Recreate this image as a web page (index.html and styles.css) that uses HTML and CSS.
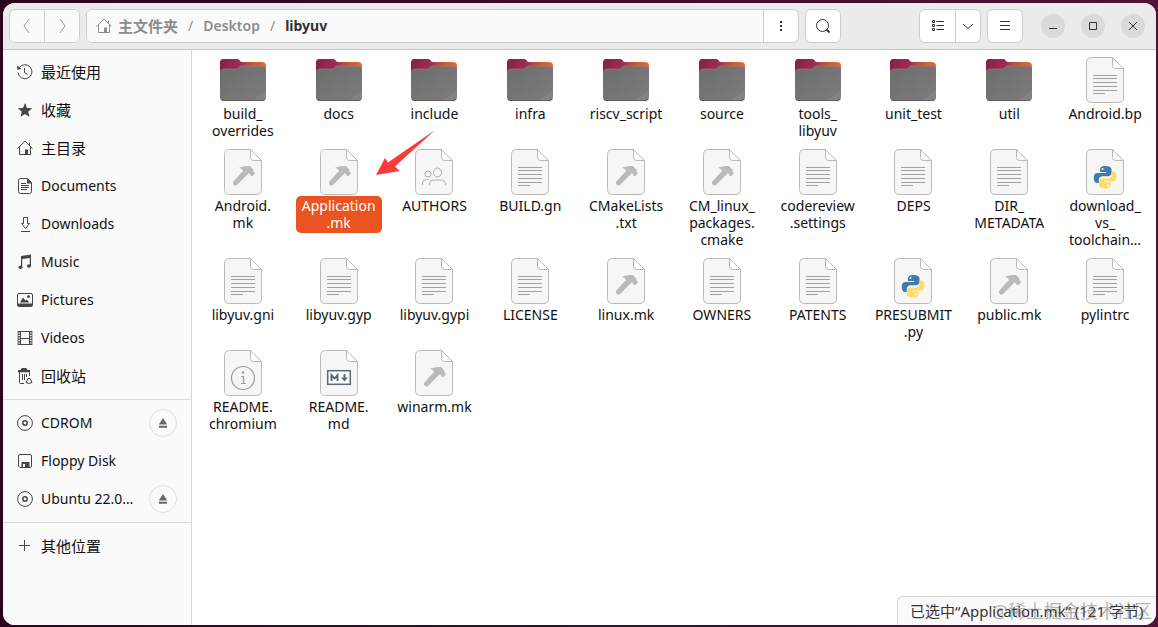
FILE: index.html
```html
<!DOCTYPE html>
<html lang="zh-CN">
<head>
<meta charset="utf-8">
<title>libyuv</title>
<link rel="stylesheet" href="styles.css">
</head>
<body>
<svg class="defs" aria-hidden="true">
  <defs>
    <linearGradient id="g-back" x1="0" x2="1" y1="0" y2="0"><stop offset="0" stop-color="#8a2453"/><stop offset=".42" stop-color="#98294f"/><stop offset=".6" stop-color="#c64a38"/><stop offset="1" stop-color="#f0682f"/></linearGradient>
    <linearGradient id="g-tab" x1="0" x2="1" y1="0" y2="0"><stop offset="0" stop-color="#85214f"/><stop offset="1" stop-color="#a02c55"/></linearGradient>
    <linearGradient id="g-front" x1="0" x2="1" y1="0" y2="1"><stop offset="0" stop-color="#6c6c6c"/><stop offset=".84" stop-color="#7a7a7a"/><stop offset=".85" stop-color="#838383"/><stop offset="1" stop-color="#808080"/></linearGradient>
    <symbol id="folder" viewBox="0 0 48 48">
      <path fill="url(#g-back)" d="M1 20V7q0-4 4-4h13q1.500 0 2.500 1.500T23.500 6H43q4 0 4 4v10z"/>
      <path fill="url(#g-tab)" d="M1 20V7q0-4 4-4h13q1.500 0 2.500 1.500l1.500 2.500-5 6z"/>
      <path fill="url(#g-front)" d="M1 16.500q0-3.500 4-3.500h12q1.500 0 2.500-1.500T22.500 10H43q4 0 4 3.500V41q0 4-4 4H5q-4 0-4-4z"/>
      <path fill="none" stroke="#a07870" stroke-width=".7" d="M1.500 15.500Q2.500 13 5 13h12q1.500 0 2.500-1.500T22.500 10H43q3 0 4 2.500"/>
      <path fill="none" stroke="#5e5e5e" d="M2 43q1 1.500 3 1.500h38q2 0 3-1.500"/>
    </symbol>
    <symbol id="page" viewBox="0 0 48 48">
      <path fill="#f6f6f6" stroke="#b9b9b9" d="M10.500 1.500h21l11 11v29q0 5-5 5h-27q-5 0-5-5v-35q0-5 5-5z"/>
      <path fill="#fff" stroke="#b9b9b9" d="M31.500 1.500v8q0 3 3 3h8z"/>
    </symbol>
    <symbol id="text" viewBox="0 0 48 48">
      <use href="#page"/>
      <path fill="none" stroke="#a2a2a2" d="M12 19.500h24M12 22.500h24M12 26.500h24M12 30.500h24M12 34.500h24M12 37.500h12"/>
    </symbol>
    <symbol id="hammer" viewBox="0 0 48 48">
      <use href="#page"/>
      <path fill="#bababa" d="M26.500 21.500l3.500 3.500L18 37q-1.500 1-3 0t-1-3l8-9z"/>
      <path fill="#bababa" d="M20.500 19.500q4-2 10.500-1.500l3.300 3.500v2l1.200.5.300 1.500-2.300 2.500-2-.2-.8-2-1.800-1.300-2.500 1-2.500-2.500q-.5-2.300-3.400-3z"/>
    </symbol>
    <symbol id="people" viewBox="0 0 48 48">
      <use href="#page"/>
      <g fill="none" stroke="#adadad"><circle cx="18" cy="26" r="3"/><ellipse cx="27.500" cy="24.500" rx="4" ry="4.500"/><path d="M12.500 37v-2q0-3.500 4-3.500h2M19.500 37v-1q0-4 5-4h6q5 0 5 4v1"/></g>
    </symbol>
    <symbol id="info" viewBox="0 0 48 48">
      <use href="#page"/>
      <g fill="none" stroke="#9c9c9c" stroke-width="1.200"><circle cx="24" cy="29" r="11.500"/><path d="M22 27.500h2.500v7M22 34.500h5"/></g><circle cx="24" cy="23.500" r="1.200" fill="#9c9c9c"/>
    </symbol>
    <symbol id="markdown" viewBox="0 0 48 48">
      <use href="#page"/>
      <rect x="12.700" y="21.700" width="22.600" height="13.600" fill="#fff" stroke="#566a70" stroke-width="1.500"/>
      <path fill="none" stroke="#566a70" stroke-width="1.900" d="M16.500 32v-6l3 3.500 3-3.500v6M29.500 25v5.500"/><path fill="#566a70" d="M26 28.500h7L29.500 32.500z"/>
    </symbol>
    <symbol id="python" viewBox="0 0 48 48">
      <use href="#page"/>
      <path fill="#3f7bad" d="M24.500 18c-4 0-5.500 1.300-5.500 3.500v2.500h6v1h-8.500c-2.700 0-3.800 2-3.800 5s1.300 5 3.500 5h1.600v-3c0-2.300 1.700-3.700 3.800-3.700h5.400c2 0 3.500-1.500 3.500-3.300v-3.500c0-2.200-2-3.500-6-3.500z"/>
      <path fill="#ffdc65" d="M24 40.500c4 0 5.500-1.300 5.500-3.500v-2.500h-6v-1H32c2.600 0 3.500-2 3.500-5s-1-5-3.300-5h-1.500v3c0 2.300-1.600 4-3.700 4h-5.500c-2 0-3.500 1.300-3.500 3.200V37c0 2.200 2 3.500 6 3.500z"/>
      <circle cx="21.500" cy="21" r="1" fill="#fff"/><circle cx="27" cy="37.500" r="1" fill="#fff"/>
    </symbol>
    <symbol id="home" viewBox="0 0 16 16"><path fill="none" stroke="currentColor" d="M.5 8.500L8 1.200l7.500 7.300M2.500 7v7.500h11V7M12.500 2.500v3"/><path fill="currentColor" d="M8 9.500h3v5H8z"/></symbol>
    <symbol id="disc" viewBox="0 0 16 16"><circle cx="8" cy="8" r="7.400" fill="none" stroke="currentColor"/><circle cx="8" cy="8" r="2.200" fill="none" stroke="currentColor" stroke-width="1.500"/></symbol>
    <symbol id="eject" viewBox="0 0 16 16"><path fill="currentColor" d="M8 3l4.200 6.500H3.800zM4 10.800h8v1.900H4z"/></symbol>
  </defs>
</svg>

<div class="window">
  <header class="bar">
    <div class="group">
      <button class="btn nav" aria-label="后退"><svg viewBox="0 0 16 16"><path d="M10 1L5 8l5 7"/></svg></button>
      <button class="btn nav" aria-label="前进"><svg viewBox="0 0 16 16"><path d="M6 1l5 7-5 7"/></svg></button>
    </div>
    <div class="group path">
      <nav class="crumbs" aria-label="路径">
        <a href="#home" class="zh"><svg class="icon"><use href="#home"/></svg>主文件夹</a><span class="slash">/</span><a href="#desktop">Desktop</a><span class="slash">/</span><a href="#libyuv" class="here">libyuv</a>
      </nav>
      <button class="btn" aria-label="更多"><svg viewBox="0 0 16 16" class="solid"><path d="M7 3h2v2H7zM7 7h2v2H7zM7 11h2v2H7z"/></svg></button>
    </div>
    <button class="btn single" aria-label="搜索"><svg viewBox="0 0 16 16"><circle cx="7.500" cy="7.500" r="6"/><path stroke-width="1.800" d="M11.500 11.500l3 3"/></svg></button>
    <div class="group view">
      <button class="btn" aria-label="列表视图"><svg viewBox="0 0 16 16"><path d="M2.500 2.500h2v2h-2zM2.500 6.500h2v2h-2zM2.500 10.500h2v2h-2zM6.500 3.500H14M6.500 7.500H14M6.500 11.500H14"/></svg></button>
      <button class="btn narrow" aria-label="视图选项"><svg viewBox="0 0 16 16"><path d="M3 6l5 4.500L13 6"/></svg></button>
    </div>
    <button class="btn single" aria-label="菜单"><svg viewBox="0 0 16 16"><path d="M3 3.500h10M3 7.500h10M3 11.500h10"/></svg></button>
    <div class="controls">
      <button aria-label="最小化"><svg viewBox="0 0 16 16"><path d="M4 10.500h8"/></svg></button>
      <button aria-label="最大化"><svg viewBox="0 0 16 16"><path d="M4.500 4.500h7v7h-7z"/></svg></button>
      <button aria-label="关闭"><svg viewBox="0 0 16 16"><path d="M4 4l8 8M12 4l-8 8"/></svg></button>
    </div>
  </header>

  <div class="body">
    <aside class="side">
      <ul>
        <li><a href="#recent" class="zh"><svg class="icon" viewBox="0 0 16 16"><path fill="none" stroke="currentColor" d="M2.200 3.700A7 7 0 1 1 1 8.500M7.500 4v4.500l3 2"/><path fill="currentColor" d="M.2 5.800V1.500L4.500 5z"/></svg>最近使用</a></li>
        <li><a href="#starred" class="zh"><svg class="icon" viewBox="0 0 16 16"><path fill="currentColor" d="M8 1l2 4.900 5.200.4-4 3.400 1.300 5.100L8 12l-4.500 2.800 1.300-5.100-4-3.400L6 5.900z"/></svg>收藏</a></li>
        <li><a href="#home" class="zh"><svg class="icon"><use href="#home"/></svg>主目录</a></li>
        <li><a href="#documents"><svg class="icon" viewBox="0 0 16 16"><path fill="none" stroke="currentColor" d="M3.500.5h7l4 4v9q0 2-2 2h-9q-2 0-2-2v-11q0-2 2-2zM4 5.500h5M4 7.500h8M4 9.500h8M4 11.500h6"/><path fill="currentColor" d="M10 .5v5h5z"/></svg>Documents</a></li>
        <li><a href="#downloads"><svg class="icon" viewBox="0 0 16 16"><path fill="none" stroke="currentColor" d="M6.500 1.500h4v6h2l-4 5-4-5h2zM4 15.500h9"/></svg>Downloads</a></li>
        <li><a href="#music"><svg class="icon" viewBox="0 0 16 16"><path fill="currentColor" d="M4 2l10-1.500V12h-1.200V4L5.200 5v8H4z"/><ellipse cx="3.500" cy="13.200" rx="2" ry="1.700" fill="currentColor"/><ellipse cx="12" cy="12" rx="2" ry="1.700" fill="currentColor"/></svg>Music</a></li>
        <li><a href="#pictures"><svg class="icon" viewBox="0 0 16 16"><path fill="none" stroke="currentColor" d="M2 1.500h12q1.500 0 1.500 1.500v9H.5V3q0-1.500 1.500-1.500z"/><path fill="currentColor" d="M0 12h16q0 3-2 3H2q-2 0-2-3zM3 10.500l3-5 2.500 3 1.500-1 2 3z"/><circle cx="11.500" cy="4.700" r="1.400" fill="currentColor"/></svg>Pictures</a></li>
        <li><a href="#videos"><svg class="icon" viewBox="0 0 16 16"><path fill="none" stroke="currentColor" d="M3.500 1.500h9v13h-9zM3.500 8.500h9M1 1.500h14M1 14.500h14"/><path fill="none" stroke="currentColor" stroke-width="1.600" stroke-dasharray="1.500 1" d="M2 1v14M14 1v14"/><path fill="none" stroke="currentColor" stroke-width=".7" d="M1 1v14M15 1v14"/></svg>Videos</a></li>
        <li><a href="#trash" class="zh"><svg class="icon" viewBox="0 0 16 16"><path fill="none" stroke="currentColor" d="M2.500 4v10.500q0 1 1 1H7M12.500 4v4M5.500 6v6M7.500 6v6M9.500 6v3M4 2.500V1.500h6v1"/><path fill="none" stroke="currentColor" d="M9 14.500l2-4h2l2 4q-3 2-6 0z"/><path fill="currentColor" d="M1 2h12v2.300H1zM4.500 0h5v2h-5z"/></svg>回收站</a></li>
      </ul>
      <ul>
        <li><a href="#cdrom"><svg class="icon"><use href="#disc"/></svg>CDROM</a><button class="eject" aria-label="弹出 CDROM"><svg><use href="#eject"/></svg></button></li>
        <li><a href="#floppy"><svg class="icon" viewBox="0 0 16 16"><path fill="none" stroke="currentColor" d="M3 1.500h10q1.500 0 1.500 1.500v10q0 1.500-1.500 1.500H3L1.500 13V3q0-1.500 1.500-1.500z"/><path fill="currentColor" fill-rule="evenodd" d="M4.500 9h8v6h-8zM6 11v3h2v-3z"/></svg>Floppy Disk</a></li>
        <li><a href="#ubuntu"><svg class="icon"><use href="#disc"/></svg>Ubuntu 22.0…</a><button class="eject" aria-label="弹出 Ubuntu"><svg><use href="#eject"/></svg></button></li>
      </ul>
      <ul>
        <li><a href="#other" class="zh"><svg class="icon" viewBox="0 0 16 16"><path fill="none" stroke="currentColor" d="M7.500 2v11M2 7.500h11"/></svg>其他位置</a></li>
      </ul>
    </aside>

    <main class="files">
      <button class="file"><svg><use href="#folder"/></svg><span>build_<br>overrides</span></button>
      <button class="file"><svg><use href="#folder"/></svg><span>docs</span></button>
      <button class="file"><svg><use href="#folder"/></svg><span>include</span></button>
      <button class="file"><svg><use href="#folder"/></svg><span>infra</span></button>
      <button class="file"><svg><use href="#folder"/></svg><span>riscv_script</span></button>
      <button class="file"><svg><use href="#folder"/></svg><span>source</span></button>
      <button class="file"><svg><use href="#folder"/></svg><span>tools_<br>libyuv</span></button>
      <button class="file"><svg><use href="#folder"/></svg><span>unit_test</span></button>
      <button class="file"><svg><use href="#folder"/></svg><span>util</span></button>
      <button class="file"><svg><use href="#text"/></svg><span>Android.bp</span></button>
      <button class="file"><svg><use href="#hammer"/></svg><span>Android.<br>mk</span></button>
      <button class="file selected" aria-pressed="true"><svg><use href="#hammer"/></svg><span>Application<br>.mk</span></button>
      <button class="file"><svg><use href="#people"/></svg><span>AUTHORS</span></button>
      <button class="file"><svg><use href="#text"/></svg><span>BUILD.gn</span></button>
      <button class="file"><svg><use href="#hammer"/></svg><span>CMakeLists<br>.txt</span></button>
      <button class="file"><svg><use href="#hammer"/></svg><span>CM_linux_<br>packages.<br>cmake</span></button>
      <button class="file"><svg><use href="#text"/></svg><span>codereview<br>.settings</span></button>
      <button class="file"><svg><use href="#text"/></svg><span>DEPS</span></button>
      <button class="file"><svg><use href="#text"/></svg><span>DIR_<br>METADATA</span></button>
      <button class="file"><svg><use href="#python"/></svg><span>download_<br>vs_<br>toolchain…</span></button>
      <button class="file"><svg><use href="#text"/></svg><span>libyuv.gni</span></button>
      <button class="file"><svg><use href="#text"/></svg><span>libyuv.gyp</span></button>
      <button class="file"><svg><use href="#text"/></svg><span>libyuv.gypi</span></button>
      <button class="file"><svg><use href="#text"/></svg><span>LICENSE</span></button>
      <button class="file"><svg><use href="#hammer"/></svg><span>linux.mk</span></button>
      <button class="file"><svg><use href="#text"/></svg><span>OWNERS</span></button>
      <button class="file"><svg><use href="#text"/></svg><span>PATENTS</span></button>
      <button class="file"><svg><use href="#python"/></svg><span>PRESUBMIT<br>.py</span></button>
      <button class="file"><svg><use href="#hammer"/></svg><span>public.mk</span></button>
      <button class="file"><svg><use href="#text"/></svg><span>pylintrc</span></button>
      <button class="file"><svg><use href="#info"/></svg><span>README.<br>chromium</span></button>
      <button class="file"><svg><use href="#markdown"/></svg><span>README.<br>md</span></button>
      <button class="file"><svg><use href="#hammer"/></svg><span>winarm.mk</span></button>
      <svg class="arrow" viewBox="0 0 60 46" aria-hidden="true"><path fill="#fb3b3b" d="M0 45L9 28l3 4.500L59 0 19 36.500l4.500 4.500z"/></svg>
      <div class="status zh">已选中“Application.mk” (121 字节)</div>
      <div class="watermark">@稀土掘金技术社区</div>
    </main>
  </div>
</div>
</body>
</html>
```
FILE: styles.css
```css
* { box-sizing: border-box; }

body {
  margin: 0;
  height: 100vh;
  padding: 3px 2px 2px 3px;
  background: linear-gradient(90deg, #2b0420, #3a0a29 40%, #4f1338);
  font: 14px/20px "Noto Sans", "Noto Sans CJK SC", sans-serif;
  color: #111;
}

.defs { position: absolute; width: 0; height: 0; }

button {
  margin: 0;
  padding: 0;
  border: 0;
  background: none;
  font: inherit;
  color: inherit;
}

a { color: inherit; text-decoration: none; }

.zh { font-size: 15px; }

.window {
  display: flex;
  flex-direction: column;
  height: 100%;
  border-radius: 12px;
  overflow: hidden;
  background: #fff;
}

.bar {
  display: flex;
  align-items: center;
  gap: 6px;
  padding: 6px 11px 6px 6px;
  background: #ebebeb;
  border-bottom: 1px solid #c4c4c4;
}

.group, .single {
  display: flex;
  height: 34px;
  border: 1px solid #cdcdcd;
  border-radius: 6px;
  background: #fff;
  overflow: hidden;
}

.btn {
  display: flex;
  align-items: center;
  justify-content: center;
  width: 35px;
}

.btn + .btn, .crumbs + .btn { border-left: 1px solid #cdcdcd; }
.btn.single { width: 36px; }
.btn.narrow { width: 25px; }
.btn.nav { background: #fafafa; }
.btn.nav:first-child { width: 34px; }

.btn svg, .controls svg {
  width: 16px;
  height: 16px;
  fill: none;
  stroke: #333;
}

.btn.nav svg { stroke: #999; }
.btn svg.solid { fill: #333; stroke: none; }

.path { flex: 1; }

.crumbs {
  flex: 1;
  display: flex;
  align-items: center;
  gap: 10px;
  padding-left: 9px;
  background: #fafafa;
  color: #8c8c8c;
  font-weight: 600;
}

.crumbs a { display: flex; align-items: center; gap: 6px; }
.crumbs .here { color: #303030; font-weight: 700; }
.slash { font-weight: 400; }
.view { margin-left: 72px; }

.icon { flex: none; width: 16px; height: 16px; }

.controls {
  display: flex;
  gap: 16px;
  margin-left: 12px;
}

.controls button {
  display: flex;
  align-items: center;
  justify-content: center;
  width: 24px;
  height: 24px;
  border-radius: 50%;
  background: #dadada;
}

.body { flex: 1; display: flex; min-height: 0; }

.side {
  flex: none;
  width: 189px;
  background: #fafafa;
  border-right: 1px solid #d8d8d8;
}

.side ul {
  margin: 0;
  padding: 3px 14px 4px;
  list-style: none;
}

.side ul + ul { padding-top: 4px; border-top: 1px solid #dcdcdc; }
.side li { display: flex; align-items: center; height: 38px; }

.side a {
  flex: 1;
  display: flex;
  align-items: center;
  gap: 8px;
  white-space: nowrap;
}

.side .icon { color: #454545; }

.eject {
  display: flex;
  align-items: center;
  justify-content: center;
  width: 28px;
  height: 28px;
  border: 1px solid #dedede;
  border-radius: 50%;
  color: #666;
}

.eject svg { width: 16px; height: 16px; }

.files {
  position: relative;
  flex: 1;
  display: grid;
  grid-template-columns: repeat(10, 1fr);
  align-content: start;
  row-gap: 7px;
  padding: 6px 3px 0 3px;
}

.file {
  display: flex;
  flex-direction: column;
  align-items: center;
  align-self: start;
  min-width: 0;
  line-height: 17px;
}

.file svg { width: 48px; height: 48px; }

.file span {
  padding: 1px 6px 2px;
  border-radius: 5px;
  white-space: nowrap;
}

.selected span { background: #e95420; color: #fff; }

.arrow {
  position: absolute;
  left: 184px;
  top: 80px;
  width: 60px;
  height: 46px;
}

.status {
  position: absolute;
  right: 0;
  bottom: 0;
  width: 259px;
  padding: 4px 12px;
  border: 1px solid #d4d4d4;
  border-width: 1px 0 0 1px;
  border-radius: 6px 0 0 0;
  background: #fafafa;
  color: #333;
  white-space: nowrap;
}

.watermark {
  position: absolute;
  right: 4px;
  bottom: 2px;
  font-size: 18px;
  line-height: 24px;
  color: rgba(110, 110, 110, .5);
  pointer-events: none;
}
```
